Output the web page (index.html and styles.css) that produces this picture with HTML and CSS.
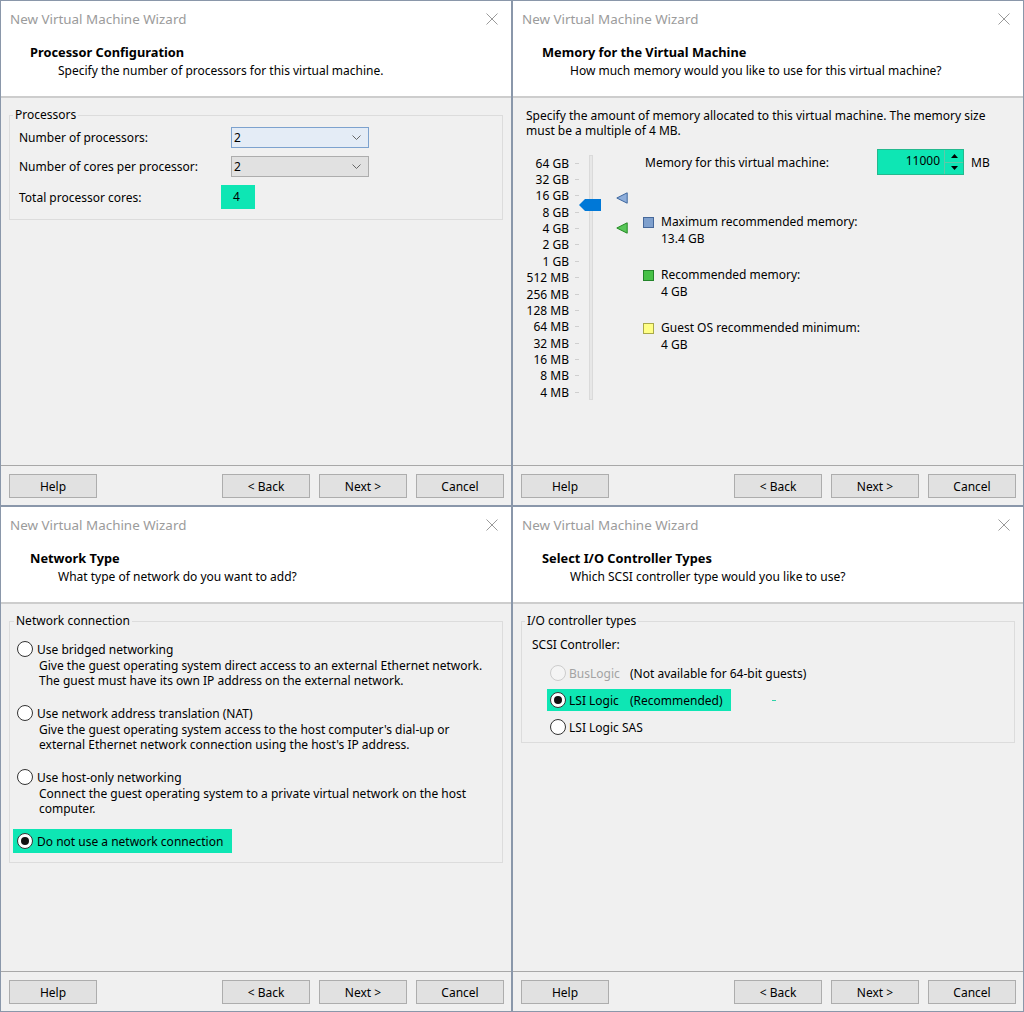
FILE: index.html
```html
<!DOCTYPE html>
<html>
<head>
<meta charset="utf-8">
<link rel="stylesheet" href="styles.css">
</head>
<body>
<div class="grid">

  <!-- Processor Configuration -->
  <section class="dlg">
    <div class="titlebar">
      <span class="title">New Virtual Machine Wizard</span>
      <svg class="close" viewBox="0 0 12 12"><path d="M0.5 0.5L11.5 11.5M11.5 0.5L0.5 11.5" stroke="#9a9a9a" stroke-width="1" fill="none"/></svg>
    </div>
    <div class="header">
      <div class="h-title">Processor Configuration</div>
      <div class="h-sub">Specify the number of processors for this virtual machine.</div>
    </div>
    <div class="body">
      <fieldset class="group">
        <legend>Processors</legend>
        <div class="proc-grid">
          <span>Number of processors:</span>
          <div class="combo focus"><span>2</span><svg class="chev" viewBox="0 0 9 5"><path d="M0.5 0.5L4.5 4.5L8.5 0.5" stroke="#666" fill="none"/></svg></div>
          <span>Number of cores per processor:</span>
          <div class="combo"><span>2</span><svg class="chev" viewBox="0 0 9 5"><path d="M0.5 0.5L4.5 4.5L8.5 0.5" stroke="#666" fill="none"/></svg></div>
          <span>Total processor cores:</span>
          <div class="total">4</div>
        </div>
      </fieldset>
    </div>
    <div class="footer">
      <button class="btn">Help</button>
      <button class="btn push">&lt; Back</button>
      <button class="btn">Next &gt;</button>
      <button class="btn">Cancel</button>
    </div>
  </section>

  <!-- Memory -->
  <section class="dlg">
    <div class="titlebar">
      <span class="title">New Virtual Machine Wizard</span>
      <svg class="close" viewBox="0 0 12 12"><path d="M0.5 0.5L11.5 11.5M11.5 0.5L0.5 11.5" stroke="#9a9a9a" stroke-width="1" fill="none"/></svg>
    </div>
    <div class="header">
      <div class="h-title">Memory for the Virtual Machine</div>
      <div class="h-sub">How much memory would you like to use for this virtual machine?</div>
    </div>
    <div class="body mem-body">
      <p class="mem-intro">Specify the amount of memory allocated to this virtual machine. The memory size<br>must be a multiple of 4 MB.</p>
      <div class="mem-row">
        <div class="scale">
          <div class="srow"><span class="lbl">64 GB</span><span class="tick"></span></div>
          <div class="srow"><span class="lbl">32 GB</span><span class="tick"></span></div>
          <div class="srow"><span class="lbl">16 GB</span><span class="tick"></span></div>
          <div class="srow"><span class="lbl">8 GB</span><span class="tick"></span></div>
          <div class="srow"><span class="lbl">4 GB</span><span class="tick"></span></div>
          <div class="srow"><span class="lbl">2 GB</span><span class="tick"></span></div>
          <div class="srow"><span class="lbl">1 GB</span><span class="tick"></span></div>
          <div class="srow"><span class="lbl">512 MB</span><span class="tick"></span></div>
          <div class="srow"><span class="lbl">256 MB</span><span class="tick"></span></div>
          <div class="srow"><span class="lbl">128 MB</span><span class="tick"></span></div>
          <div class="srow"><span class="lbl">64 MB</span><span class="tick"></span></div>
          <div class="srow"><span class="lbl">32 MB</span><span class="tick"></span></div>
          <div class="srow"><span class="lbl">16 MB</span><span class="tick"></span></div>
          <div class="srow"><span class="lbl">8 MB</span><span class="tick"></span></div>
          <div class="srow"><span class="lbl">4 MB</span><span class="tick"></span></div>
        </div>
        <div class="track">
          <svg class="thumb" style="top:43px" viewBox="0 0 22 12"><polygon points="0,6 6,0 22,0 22,12 6,12" fill="#0078d7"/></svg>
        </div>
        <div class="markers">
          <svg class="marker" style="top:37px" viewBox="0 0 12 12"><polygon points="0.8,6 11.2,0.8 11.2,11.2" fill="#8eaedb" stroke="#3e679e" stroke-width="1"/></svg>
          <svg class="marker" style="top:67px" viewBox="0 0 12 12"><polygon points="0.8,6 11.2,0.8 11.2,11.2" fill="#58c658" stroke="#248a24" stroke-width="1"/></svg>
        </div>
        <div class="info">
          <div class="mem-line">
            <span class="mem-label">Memory for this virtual machine:</span>
            <div class="spin">
              <span class="spin-val">11000</span>
              <div class="spin-btns">
                <div class="sb"><svg viewBox="0 0 7 4"><polygon points="0,4 3.5,0 7,4" fill="#000"/></svg></div>
                <div class="sb"><svg viewBox="0 0 7 4"><polygon points="0,0 3.5,4 7,0" fill="#000"/></svg></div>
              </div>
            </div>
            <span class="mb">MB</span>
          </div>
          <div class="legend-item first"><span class="sq sq-blue"></span><div>Maximum recommended memory:<br>13.4 GB</div></div>
          <div class="legend-item"><span class="sq sq-green"></span><div>Recommended memory:<br>4 GB</div></div>
          <div class="legend-item"><span class="sq sq-yellow"></span><div>Guest OS recommended minimum:<br>4 GB</div></div>
        </div>
      </div>
    </div>
    <div class="footer">
      <button class="btn">Help</button>
      <button class="btn push">&lt; Back</button>
      <button class="btn">Next &gt;</button>
      <button class="btn">Cancel</button>
    </div>
  </section>

  <!-- Network -->
  <section class="dlg">
    <div class="titlebar">
      <span class="title">New Virtual Machine Wizard</span>
      <svg class="close" viewBox="0 0 12 12"><path d="M0.5 0.5L11.5 11.5M11.5 0.5L0.5 11.5" stroke="#9a9a9a" stroke-width="1" fill="none"/></svg>
    </div>
    <div class="header">
      <div class="h-title">Network Type</div>
      <div class="h-sub">What type of network do you want to add?</div>
    </div>
    <div class="body">
      <fieldset class="group net">
        <legend>Network connection</legend>
        <div class="opt">
          <div class="rrow"><span class="radio"></span><span>Use bridged networking</span></div>
          <div class="desc">Give the guest operating system direct access to an external Ethernet network.<br>The guest must have its own IP address on the external network.</div>
        </div>
        <div class="opt">
          <div class="rrow"><span class="radio"></span><span>Use network address translation (NAT)</span></div>
          <div class="desc">Give the guest operating system access to the host computer's dial-up or<br>external Ethernet network connection using the host's IP address.</div>
        </div>
        <div class="opt">
          <div class="rrow"><span class="radio"></span><span>Use host-only networking</span></div>
          <div class="desc">Connect the guest operating system to a private virtual network on the host<br>computer.</div>
        </div>
        <div class="rrow hl-net"><span class="radio on"></span><span>Do not use a network connection</span></div>
      </fieldset>
    </div>
    <div class="footer">
      <button class="btn">Help</button>
      <button class="btn push">&lt; Back</button>
      <button class="btn">Next &gt;</button>
      <button class="btn">Cancel</button>
    </div>
  </section>

  <!-- I/O -->
  <section class="dlg">
    <div class="titlebar">
      <span class="title">New Virtual Machine Wizard</span>
      <svg class="close" viewBox="0 0 12 12"><path d="M0.5 0.5L11.5 11.5M11.5 0.5L0.5 11.5" stroke="#9a9a9a" stroke-width="1" fill="none"/></svg>
    </div>
    <div class="header">
      <div class="h-title">Select I/O Controller Types</div>
      <div class="h-sub">Which SCSI controller type would you like to use?</div>
    </div>
    <div class="body">
      <fieldset class="group io">
        <legend>I/O controller types</legend>
        <div class="scsi">SCSI Controller:</div>
        <div class="io-opts">
          <div class="rrow io-row"><span class="radio dis"></span><span class="name dim">BusLogic</span><span>(Not available for 64-bit guests)</span></div>
          <div class="io-line">
            <div class="rrow io-row hl-io"><span class="radio on"></span><span class="name">LSI Logic</span><span>(Recommended)</span></div>
            <span class="dash"></span>
          </div>
          <div class="rrow io-row"><span class="radio"></span><span>LSI Logic SAS</span></div>
        </div>
      </fieldset>
    </div>
    <div class="footer">
      <button class="btn">Help</button>
      <button class="btn push">&lt; Back</button>
      <button class="btn">Next &gt;</button>
      <button class="btn">Cancel</button>
    </div>
  </section>

</div>
</body>
</html>
```

FILE: styles.css
```css
* { box-sizing: border-box; }
html, body { margin: 0; padding: 0; }
body {
  width: 1024px;
  height: 1012px;
  overflow: hidden;
  background: #fff;
  font-family: "Noto Sans", "Open Sans", sans-serif;
  font-size: 12px;
  color: #000;
}
.grid {
  display: grid;
  grid-template-columns: 512px 512px;
  grid-template-rows: 506px 506px;
}
.dlg {
  border: 1px solid #8a97aa;
  display: flex;
  flex-direction: column;
  background: #f0f0f0;
  min-height: 0;
}
.titlebar {
  height: 35px;
  flex: none;
  background: #fff;
  display: flex;
  align-items: center;
  justify-content: space-between;
  padding: 0 13px 0 9px;
}
.title { color: #9b9b9b; font-size: 13.4px; line-height: 16px; }
.close { width: 12px; height: 12px; display: block; }
.header {
  flex: none;
  height: 62px;
  background: #fff;
  padding: 8px 0 0 29px;
  border-bottom: 2px solid #cdcdcd;
}
.h-title { font-weight: bold; font-size: 12.8px; line-height: 16px; }
.h-sub { margin-top: 3px; padding-left: 28px; line-height: 16px; }
.body {
  flex: 1;
  padding: 9px 8px 0 8px;
  min-height: 0;
}
.footer {
  flex: none;
  height: 40px;
  border-top: 1px solid #a8a8a8;
  padding: 8px 7px 7px 8px;
  display: flex;
  gap: 9px;
}
.btn {
  width: 88px;
  height: 24px;
  margin: 0;
  padding: 0;
  background: #e1e1e1;
  border: 1px solid #adadad;
  font-family: inherit;
  font-size: 12px;
  color: #000;
}
.push { margin-left: auto; }

/* group box */
.group {
  margin: 0;
  padding: 0;
  border: 1px solid #dcdcdc;
  min-width: 0;
}
.group legend {
  margin-left: 3px;
  padding: 0 2px;
  line-height: 16px;
}

/* processors */
.proc-grid {
  display: grid;
  grid-template-columns: 202px 148px;
  grid-template-rows: 28px 30px 32px;
  align-items: center;
  padding: 0 0 6px 9px;
}
.combo {
  margin-left: 10px;
  width: 138px;
  height: 21px;
  border: 1px solid #adadad;
  background: #e1e1e1;
  display: flex;
  align-items: center;
  justify-content: space-between;
  padding: 0 7px 0 2px;
}
.combo.focus { background: #e4ecf6; border-color: #7da2ce; }
.chev { width: 9px; height: 5px; display: block; }
.total {
  width: 34px;
  height: 24px;
  background: #0ee6b4;
  padding-left: 12px;
  line-height: 24px;
}

/* memory */
.mem-body { padding: 10px 13px 0 13px; }
.mem-intro { margin: 0; line-height: 15px; white-space: nowrap; }
.mem-row { display: flex; margin-top: 11px; }
.scale { margin-top: 6px; width: 54px; flex: none; }
.srow { height: 16.36px; display: flex; align-items: center; }
.lbl { width: 43px; text-align: right; white-space: nowrap; }
.tick { width: 4px; height: 1px; background: #cfcfcf; margin-left: 6px; }
.track {
  position: relative;
  flex: none;
  margin: 6px 0 0 9px;
  width: 4px;
  height: 245px;
  background: #e7e7e7;
  border: 1px solid #dadada;
}
.thumb { position: absolute; left: -11px; width: 22px; height: 12px; display: block; }
.markers { position: relative; flex: none; width: 50px; height: 245px; margin-top: 6px; }
.marker { position: absolute; left: 23px; width: 12px; height: 12px; display: block; }
.info { flex: 1; }
.mem-line { display: flex; align-items: center; height: 26px; }
.mem-label { width: 234px; padding-left: 2px; }
.spin {
  width: 87px;
  height: 26px;
  background: #0ee6b4;
  border: 1px solid #24b98e;
  display: flex;
}
.spin-val { flex: 1; text-align: right; padding-right: 4px; line-height: 22px; }
.spin-btns { width: 19px; display: flex; flex-direction: column; border-left: 1px solid #5fc9a8; }
.sb { flex: 1; display: flex; align-items: center; justify-content: center; }
.sb + .sb { border-top: 1px solid #5fc9a8; }
.sb svg { width: 7px; height: 4px; display: block; }
.mb { margin-left: 7px; }
.legend-item { display: flex; line-height: 17px; margin-top: 19px; }
.legend-item.first { margin-top: 38px; }
.sq { width: 11px; height: 11px; margin-top: 4px; margin-right: 7px; flex: none; border: 1px solid; }
.sq-blue { background: #7fa0cd; border-color: #46689a; }
.sq-green { background: #47c147; border-color: #23842a; }
.sq-yellow { background: #ffff86; border-color: #a9a94a; }

/* radios */
.rrow { display: flex; align-items: center; height: 18px; white-space: nowrap; }
.radio {
  width: 16px;
  height: 16px;
  flex: none;
  border: 1px solid #333;
  border-radius: 50%;
  background: #fff;
  margin-right: 4px;
  position: relative;
}
.radio.on::after {
  content: "";
  position: absolute;
  left: 3px;
  top: 3px;
  width: 8px;
  height: 8px;
  border-radius: 50%;
  background: #111;
}
.radio.dis { border-color: #cccccc; background: #f4f4f4; }

/* network */
.net { padding: 11px 7px 9px 7px; }
.net legend { margin-left: -3px; }
.opt { margin-bottom: 16px; }
.desc { padding-left: 22px; line-height: 15px; white-space: nowrap; }
.hl-net {
  margin: -3px 0 0 -4px;
  padding-left: 4px;
  width: 219px;
  height: 24px;
  background: #0ee6b4;
}

/* io */
.io { padding: 8px 10px 6px 10px; }
.io legend { margin-left: -7px; }
.scsi { line-height: 16px; }
.io-opts { margin-top: 11px; padding-left: 18px; display: flex; flex-direction: column; gap: 9px; }
.io-row .radio { margin-right: 3px; }
.name { width: 61px; }
.dim { color: #a3a3a3; }
.io-line { display: flex; align-items: center; height: 18px; }
.hl-io {
  margin-left: -3px;
  padding-left: 3px;
  width: 184px;
  height: 22px;
  background: #0ee6b4;
}
.dash { width: 4px; height: 1px; background: #2ed3a8; margin-left: 41px; }
```
